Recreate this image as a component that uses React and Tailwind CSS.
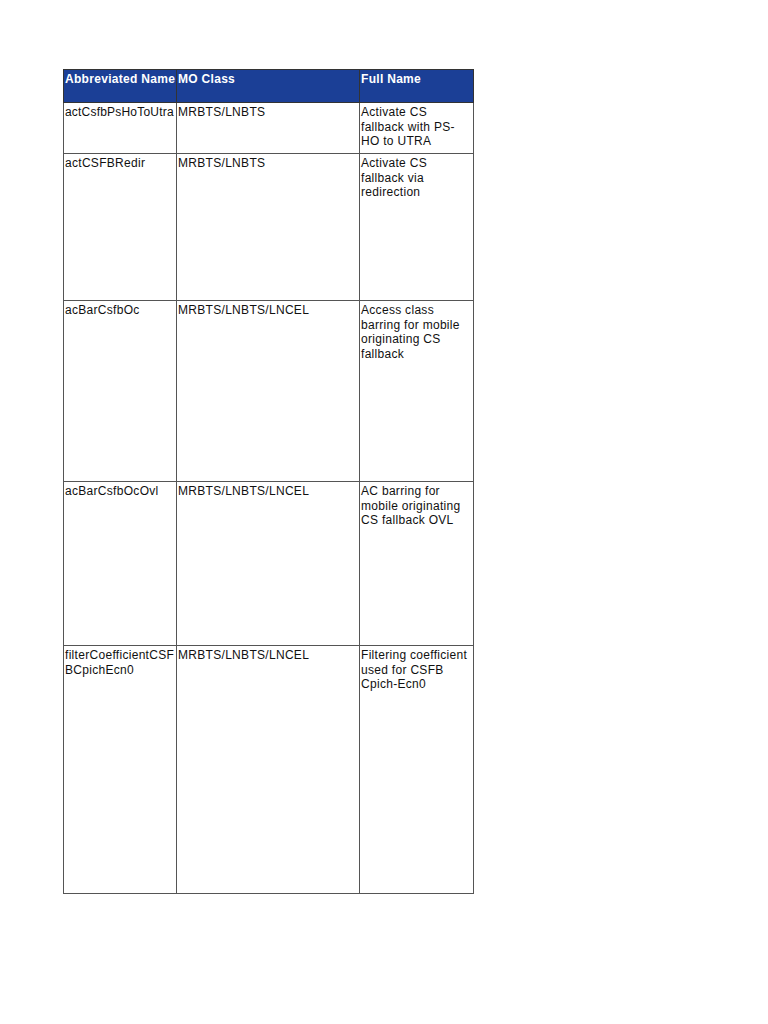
import React from "react";

const rows = [
  { h: "h-[51px]", a: "actCsfbPsHoToUtra", m: "MRBTS/LNBTS", f: "Activate CS fallback with PS-HO to UTRA", nw: true },
  { h: "h-[147px]", a: "actCSFBRedir", m: "MRBTS/LNBTS", f: "Activate CS fallback via redirection" },
  { h: "h-[181px]", a: "acBarCsfbOc", m: "MRBTS/LNBTS/LNCEL", f: "Access class barring for mobile originating CS fallback" },
  { h: "h-[164px]", a: "acBarCsfbOcOvl", m: "MRBTS/LNBTS/LNCEL", f: "AC barring for mobile originating CS fallback OVL" },
  { h: "h-[248px]", a: "filterCoefficientCSFBCpichEcn0", m: "MRBTS/LNBTS/LNCEL", f: "Filtering coefficient used for CSFB Cpich-Ecn0" },
];

export default function App() {
  return (
    <div className="w-[768px] h-[1024px] bg-white pt-[69px] pl-[63px] font-['Liberation_Sans',Arial,sans-serif]">
      <table className="table-fixed border-collapse w-[410px] text-[12px] leading-[14.5px] tracking-[0.3px]">
        <colgroup>
          <col className="w-[113px]" />
          <col className="w-[183px]" />
          <col className="w-[114px]" />
        </colgroup>
        <thead>
          <tr className="h-[33px] bg-[#1b3f96] text-white font-bold">
            <th className="border border-[#333] align-top text-left px-[1px] pt-[2px] font-bold whitespace-nowrap">Abbreviated Name</th>
            <th className="border border-[#333] align-top text-left px-[1px] pt-[2px] font-bold">MO Class</th>
            <th className="border border-[#333] align-top text-left px-[1px] pt-[2px] font-bold">Full Name</th>
          </tr>
        </thead>
        <tbody className="text-[#111]">
          {rows.map((r, i) => (
            <tr key={i} className={r.h}>
              <td className={r.nw ? "border border-[#555] align-top pl-[1px] pr-0 pt-[2px] whitespace-nowrap tracking-[0.2px]" : "border border-[#555] align-top px-[1px] pt-[2px] break-all"}>{r.a}</td>
              <td className="border border-[#555] align-top px-[1px] pt-[2px]">{r.m}</td>
              <td className="border border-[#555] align-top px-[1px] pt-[2px] pr-[4px]">{r.f}</td>
            </tr>
          ))}
        </tbody>
      </table>
    </div>
  );
}
